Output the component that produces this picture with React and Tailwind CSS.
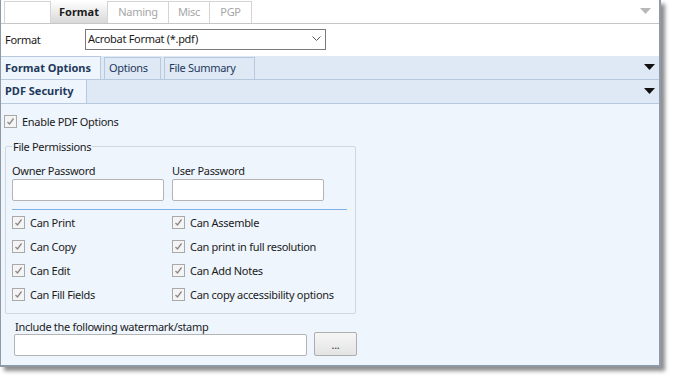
import React from 'react';

const font = { fontFamily: '"Noto Sans", "Open Sans", sans-serif' };

function Check({ label }) {
  return (
    <label className="flex h-[13px] items-center gap-[5px] text-[11px] leading-[13px] text-[#1b1b1b]">
      <span className="flex h-[13px] w-[13px] shrink-0 items-center justify-center border border-[#a9a9a9] bg-[#f4f4f4]">
        <svg width="9" height="9" viewBox="0 0 9 9">
          <path d="M1.5 5 L3.5 7 L7.5 1.5" fill="none" stroke="#8a8a8a" strokeWidth="1.3" />
        </svg>
      </span>
      <span>{label}</span>
    </label>
  );
}

function Caret({ color = '#111' }) {
  return (
    <svg width="11" height="6" viewBox="0 0 11 6">
      <path d="M0 0 H11 L5.5 6 Z" fill={color} />
    </svg>
  );
}

export default function App() {
  const left = ['Can Print', 'Can Copy', 'Can Edit', 'Can Fill Fields'];
  const right = ['Can Assemble', 'Can print in full resolution', 'Can Add Notes', 'Can copy accessibility options'];

  return (
    <div className="h-[382px] w-[677px] bg-white tracking-[-0.3px]" style={font}>
      <div className="flex h-[367px] w-[661px] flex-col border-l border-r-2 border-b-2 border-[#8e9aa8] bg-white shadow-[4px_4px_4px_rgba(0,0,0,0.45)]">
        {/* top tabs */}
        <div className="flex h-[24px] shrink-0 items-end justify-between border-b border-[#c6c6c6] pl-[3px] pr-[8px]">
          <div className="flex h-[22px] items-end">
            <div className="h-full w-[47px] border border-b-0 border-[#d4d4d4] bg-white" />
            <div className="flex h-full w-[56px] items-center justify-center bg-gradient-to-b from-white to-[#d8d8d8] text-[11px] font-bold tracking-normal text-[#1c1c1c]">
              Format
            </div>
            <div className="flex h-full w-[62px] items-center justify-center border border-b-0 border-[#d4d4d4] text-[11px] text-[#a6a6a6]">
              Naming
            </div>
            <div className="flex h-full w-[41px] items-center justify-center border border-b-0 border-l-0 border-[#d4d4d4] text-[11px] text-[#a6a6a6]">
              Misc
            </div>
            <div className="flex h-full w-[42px] items-center justify-center border border-b-0 border-l-0 border-[#d4d4d4] text-[11px] text-[#a6a6a6]">
              PGP
            </div>
          </div>
          <div className="mb-[9px]">
            <Caret color="#b8b8b8" />
          </div>
        </div>

        {/* format row */}
        <div className="flex h-[32px] shrink-0 items-center pl-[4px]">
          <span className="w-[80px] text-[11px] text-[#1b1b1b]">Format</span>
          <div className="-mt-[2px] flex h-[21px] w-[241px] items-center justify-between border border-[#7a7a7a] bg-white pl-[2px] pr-[4px] text-[11px] text-[#1b1b1b]">
            <span>Acrobat Format (*.pdf)</span>
            <svg width="9" height="6" viewBox="0 0 9 6">
              <path d="M0.5 0.5 L4.5 4.5 L8.5 0.5" fill="none" stroke="#555" strokeWidth="1" />
            </svg>
          </div>
        </div>

        {/* second tab row */}
        <div className="flex h-[24px] shrink-0 items-end justify-between border-b border-[#b8c9de] bg-[#dfe8f5] pr-[4px]">
          <div className="flex h-[23px] items-end gap-[3px]">
            <div className="flex h-full w-[100px] items-center border-r border-t border-[#b8c9de] bg-[#eef5fd] pl-[4px] text-[11px] font-bold tracking-normal text-[#1e395b]">
              Format Options
            </div>
            <div className="flex h-[22px] w-[57px] items-center border border-b-0 border-[#b8c9de] pl-[4px] text-[11px] text-[#1e395b]">
              Options
            </div>
            <div className="flex h-[22px] w-[91px] items-center border border-b-0 border-[#b8c9de] pl-[4px] text-[11px] text-[#1e395b]">
              File Summary
            </div>
          </div>
          <div className="mb-[9px]">
            <Caret />
          </div>
        </div>

        {/* PDF Security row */}
        <div className="flex h-[24px] shrink-0 items-end justify-between border-b border-[#b8c9de] bg-[#dfe8f5] pr-[4px]">
          <div className="flex h-[23px] w-[86px] items-center border-r border-[#b8c9de] bg-[#eef5fd] pl-[4px] text-[11px] font-bold tracking-normal text-[#1e395b]">
            PDF Security
          </div>
          <div className="mb-[9px]">
            <Caret />
          </div>
        </div>

        {/* content */}
        <div className="flex flex-1 flex-col bg-[#eef5fd] pl-[3px] pt-[11px]">
          <Check label="Enable PDF Options" />

          <fieldset className="ml-[1px] mt-[12px] w-[351px] rounded-[2px] border border-[#d0d7e0] px-[6px] pb-[12px]">
            <legend className="px-[1px] text-[11px] leading-[13px] text-[#1b1b1b]">File Permissions</legend>
            <div className="mt-[11px] flex gap-[8px]">
              <div className="flex flex-col gap-[2px]">
                <span className="text-[11px] leading-[13px] text-[#1b1b1b]">Owner Password</span>
                <div className="h-[22px] w-[152px] rounded-[2px] border border-[#b4b4b4] bg-white" />
              </div>
              <div className="flex flex-col gap-[2px]">
                <span className="text-[11px] leading-[13px] text-[#1b1b1b]">User Password</span>
                <div className="h-[22px] w-[152px] rounded-[2px] border border-[#b4b4b4] bg-white" />
              </div>
            </div>
            <div className="mt-[8px] mr-[2px] h-px bg-[#7fb0e6]" />
            <div className="mt-[6px] grid grid-cols-[160px_1fr] gap-y-[11px]">
              {left.map((l, i) => (
                <React.Fragment key={l}>
                  <Check label={l} />
                  <Check label={right[i]} />
                </React.Fragment>
              ))}
            </div>
          </fieldset>

          <div className="ml-[11px] mt-[6px] text-[11px] leading-[13px] text-[#1b1b1b]">Include the following watermark/stamp</div>
          <div className="ml-[10px] mt-[1px] flex items-start gap-[7px]">
            <div className="h-[22px] w-[293px] rounded-[2px] border border-[#b4b4b4] bg-white" />
            <div className="-mt-[2px] flex h-[24px] w-[43px] items-center justify-center rounded-[2px] border border-[#adadad] bg-gradient-to-b from-[#f6f6f6] to-[#e4e4e4] text-[11px] leading-none text-[#333]">
              ...
            </div>
          </div>
        </div>
      </div>
    </div>
  );
}
